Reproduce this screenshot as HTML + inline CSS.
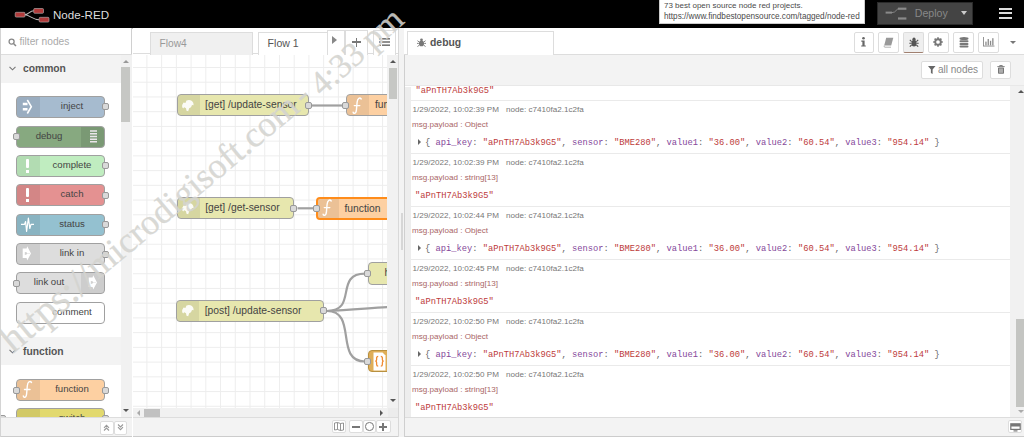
<!DOCTYPE html>
<html><head><meta charset="utf-8">
<style>
*{box-sizing:border-box;margin:0;padding:0}
html,body{width:1024px;height:443px;overflow:hidden;background:#fff;font-family:"Liberation Sans",sans-serif;position:relative}
.a{position:absolute}
#hdr{left:0;top:0;width:1024px;height:29px;background:#000;border-bottom:1px solid #c4c4c4}
.node{position:absolute;border:1px solid #a0a0a0;border-radius:4px;font-size:9.6px;color:#444;overflow:visible}
.node .ic{position:absolute;top:0;bottom:0;width:23px;background:rgba(0,0,0,0.07)}
.node .lb{position:absolute;top:0;bottom:0;line-height:18.8px;white-space:nowrap;text-align:center}
.port{position:absolute;width:7px;height:7px;background:#d9d9d9;border:1px solid #999;border-radius:2px}
.btn{position:absolute;background:#fff;border:1px solid #ddd;border-radius:2px}
.ts{position:absolute;font-size:8.1px;color:#777;white-space:nowrap}
.mt{position:absolute;font-size:8.1px;color:#a66;white-space:nowrap}
.mono{position:absolute;font-family:"Liberation Mono",monospace;font-size:8.75px;white-space:pre;color:#666}
.k{color:#84479a}.s{color:#bd3b3b}
.wn{font-size:10.3px}
.wn .lb{line-height:19.6px}
.sep{position:absolute;left:410.7px;width:599px;height:1px;background:#eaeaea}
</style></head><body>

<!-- HEADER -->
<div id="hdr" class="a"></div>
<svg class="a" style="left:14px;top:7px" width="36" height="16" viewBox="0 0 36 16">
  <path d="M10.5 7.8 C14.5 7.8 15.5 3.8 19.8 3.8 M10.5 7.8 C15.5 7.8 19 12.8 25 12.8" stroke="#bbb" stroke-width="1.1" fill="none"/>
  <rect x="1.2" y="5.3" width="9.8" height="4.8" rx="1" fill="#b03a3a" stroke="#bbb" stroke-width="0.6"/>
  <rect x="19.7" y="1.5" width="9.8" height="4.8" rx="1" fill="#b03a3a" stroke="#bbb" stroke-width="0.6"/>
  <rect x="25.2" y="10.3" width="9.8" height="4.8" rx="1" fill="#b03a3a" stroke="#bbb" stroke-width="0.6"/>
</svg>
<div class="a" style="left:53px;top:7.5px;font-size:11.6px;color:#ddd;line-height:14px">Node-RED</div>

<!-- tooltip -->
<div class="a" style="left:659px;top:0;width:206px;height:24.3px;background:#fff;border:1px solid #ccc;border-top:none"></div>
<div class="a" style="left:664px;top:0.2px;font-size:8px;line-height:11px;color:#4a4a4a;white-space:nowrap">73 best open source node red projects.<br><span style="font-size:8.2px">https://www.findbestopensource.com/tagged/node-red</span></div>

<!-- deploy -->
<div class="a" style="left:877px;top:2.2px;width:96.2px;height:22.8px;background:#444;border:1px solid #2a2a2a"></div>
<svg class="a" style="left:885px;top:6px" width="22" height="15" viewBox="0 0 22 15"><g fill="#8a8a8a"><rect x="0.6" y="5.6" width="6.4" height="2"/><rect x="13" y="1.6" width="8.4" height="2.2"/><rect x="13" y="11.4" width="8.4" height="2.2"/></g><path d="M7 6.6 L9.5 6 L13 2.7" stroke="#8a8a8a" stroke-width="0.9" fill="none"/></svg>
<div class="a" style="left:914.8px;top:7.3px;font-size:10.6px;color:#888;line-height:13px">Deploy</div>
<div class="a" style="left:961px;top:11px;width:0;height:0;border-left:3.5px solid transparent;border-right:3.5px solid transparent;border-top:4px solid #ccc"></div>
<div class="a" style="left:999px;top:8px;width:13px;height:2px;background:#ddd"></div>
<div class="a" style="left:999px;top:12px;width:13px;height:2px;background:#ddd"></div>
<div class="a" style="left:999px;top:16.5px;width:13px;height:2px;background:#ddd"></div>

<!-- PALETTE -->
<div class="a" style="left:0;top:28px;width:132.4px;height:409px;background:#fff;border-left:1px solid #d4d4d4;border-right:1px solid #d0d0d0"></div>
<div class="a" style="left:1px;top:54px;width:131px;height:1px;background:#ddd"></div>
<svg class="a" style="left:8px;top:38px" width="9" height="9" viewBox="0 0 9 9"><circle cx="3.6" cy="3.6" r="2.5" stroke="#888" stroke-width="1.3" fill="none"/><path d="M5.5 5.5 L8 8" stroke="#888" stroke-width="1.5"/></svg>
<div class="a" style="left:19.5px;top:36px;font-size:10.2px;color:#aaa;line-height:12px">filter nodes</div>
<div class="a" style="left:1px;top:55px;width:120px;height:28px;background:#f3f3f3"></div>
<svg class="a" style="left:9px;top:66px" width="7" height="5" viewBox="0 0 7 5"><path d="M0.5 0.8 L3.5 3.8 L6.5 0.8" stroke="#777" stroke-width="1.1" fill="none"/></svg>
<div class="a" style="left:23px;top:62px;font-size:10.3px;font-weight:bold;color:#555;line-height:13px">common</div>
<!-- palette scrollbar -->
<div class="a" style="left:121px;top:55px;width:11px;height:362px;background:#f1f1f1"></div>
<div class="a" style="left:123px;top:59.5px;width:0;height:0;border-left:3px solid transparent;border-right:3px solid transparent;border-bottom:3px solid #999"></div>
<div class="a" style="left:121.3px;top:66.5px;width:9px;height:55px;background:#c6c7c4"></div>
<div class="a" style="left:123px;top:409px;width:0;height:0;border-left:3px solid transparent;border-right:3px solid transparent;border-top:3px solid #555"></div>

<!-- palette nodes -->
<div class="node" style="left:16px;top:95.8px;width:89px;height:22px;background:#a6bbcf"><div class="ic" style="left:0;border-radius:4px 0 0 4px"></div><div class="lb" style="left:23px;right:0">inject</div></div>
<div class="port" style="left:102px;top:103.3px"></div>
<svg class="a" style="left:16px;top:96px" width="24" height="22" viewBox="0 0 24 22"><g stroke="#fff" fill="none"><path d="M6.8 8 H11.5 M6.8 13.3 H11.5" stroke-width="2.4"/><path d="M11.3 4 L15.3 10.7 L11.3 17.5" stroke-width="1.6"/></g></svg>

<div class="node" style="left:16px;top:125.5px;width:89px;height:22px;background:#87a980"><div class="ic" style="right:0;border-radius:0 4px 4px 0;background:rgba(0,0,0,0.09)"></div><div class="lb" style="left:0;right:23px">debug</div></div>
<div class="port" style="left:13px;top:133px"></div>
<svg class="a" style="left:88px;top:129px" width="12" height="16" viewBox="0 0 12 16"><g stroke="#ebe6ea" stroke-width="1.5"><path d="M2 2 H9 M2 4.7 H9 M2 7.5 H9 M2 10.2 H9 M2 12.8 H9"/></g></svg>

<div class="node" style="left:16px;top:154.7px;width:89px;height:22px;background:#c0edc0"><div class="ic" style="left:0;border-radius:4px 0 0 4px"></div><div class="lb" style="left:23px;right:0">complete</div></div>
<div class="port" style="left:102px;top:162px"></div>
<div class="a" style="left:26.3px;top:158.5px;width:2.6px;height:9.5px;background:#fff;border-radius:1px"></div><div class="a" style="left:26.3px;top:170px;width:2.6px;height:2.6px;background:#fff"></div>

<div class="node" style="left:16px;top:183.9px;width:89px;height:22px;background:#e49191"><div class="ic" style="left:0;border-radius:4px 0 0 4px"></div><div class="lb" style="left:23px;right:0">catch</div></div>
<div class="port" style="left:102px;top:191.5px"></div>
<div class="a" style="left:26.3px;top:187.5px;width:2.6px;height:9.5px;background:#fff;border-radius:1px"></div><div class="a" style="left:26.3px;top:199px;width:2.6px;height:2.6px;background:#fff"></div>

<div class="node" style="left:16px;top:213.5px;width:89px;height:22px;background:#94c1d0"><div class="ic" style="left:0;border-radius:4px 0 0 4px"></div><div class="lb" style="left:23px;right:0">status</div></div>
<div class="port" style="left:102px;top:221px"></div>
<svg class="a" style="left:14px;top:212px" width="30" height="26" viewBox="14 212 30 26"><path d="M21 224.4 H24.5 L25.6 221.5 L26.6 231.5 L28.4 218 L29.8 228.5 L31 224.4 H34" fill="none" stroke="#fff" stroke-width="1.2" stroke-linejoin="round"/></svg>

<div class="node" style="left:16px;top:242.7px;width:89px;height:22px;background:#ddd"><div class="ic" style="left:0;border-radius:4px 0 0 4px"></div><div class="lb" style="left:23px;right:0">link in</div></div>
<div class="port" style="left:102px;top:250.5px"></div>
<svg class="a" style="left:14px;top:241px" width="30" height="26" viewBox="14 241 30 26"><path d="M22.7 248.6 H26.6 L27.2 246.2 L31 253.4 L27.2 260.6 L26.6 258 H22.7 Z" fill="#fff"/><path d="M24.8 252.1 Q27.2 252.1 27.2 253.5 Q27.2 254.9 24.8 254.9 Z" fill="#d2d2d2"/><path d="M27 253.5 H30" stroke="#d8d8d8" stroke-width="0.5"/></svg>

<div class="node" style="left:16px;top:271.9px;width:89px;height:22px;background:#ddd"><div class="ic" style="right:0;border-radius:0 4px 4px 0"></div><div class="lb" style="left:0;right:23px">link out</div></div>
<div class="port" style="left:13px;top:279.5px"></div>
<svg class="a" style="left:80.2px;top:270.2px" width="30" height="26" viewBox="14 241 30 26"><path d="M22.7 248.6 H26.6 L27.2 246.2 L31 253.4 L27.2 260.6 L26.6 258 H22.7 Z" fill="#fff"/><path d="M24.8 252.1 Q27.2 252.1 27.2 253.5 Q27.2 254.9 24.8 254.9 Z" fill="#d2d2d2"/><path d="M27 253.5 H30" stroke="#d8d8d8" stroke-width="0.5"/></svg>

<div class="node" style="left:16px;top:301.6px;width:89px;height:22px;background:#fff"><div class="ic" style="left:0;border-radius:4px 0 0 4px;background:rgba(0,0,0,0.05)"></div><div class="lb" style="left:23px;right:0">comment</div></div>

<div class="a" style="left:1px;top:337px;width:120px;height:28px;background:#f3f3f3"></div>
<svg class="a" style="left:9px;top:349px" width="7" height="5" viewBox="0 0 7 5"><path d="M0.5 0.8 L3.5 3.8 L6.5 0.8" stroke="#777" stroke-width="1.1" fill="none"/></svg>
<div class="a" style="left:23px;top:344.5px;font-size:10.3px;font-weight:bold;color:#555;line-height:13px">function</div>

<div class="node" style="left:16px;top:378.8px;width:89px;height:22px;background:#fdd0a2"><div class="ic" style="left:0;border-radius:4px 0 0 4px"></div><div class="lb" style="left:23px;right:0">function</div></div>
<div class="port" style="left:13px;top:386.5px"></div><div class="port" style="left:102px;top:386.5px"></div>
<svg class="a" style="left:12px;top:377px" width="32" height="26" viewBox="12 377 32 26"><path d="M31.5 382.5 Q30.5 381 29 381.8 Q27.6 382.8 27.3 386 L26.6 394 Q26.2 397.5 24.3 397.2 Q23.4 397 23.3 396 M24.5 389.5 H30" fill="none" stroke="#fff" stroke-width="1.4" stroke-linecap="round"/></svg>

<div class="a" style="left:1px;top:400px;width:120px;height:17px;overflow:hidden">
  <div class="node" style="left:15px;top:8.4px;width:89px;height:21px;background:#e2d96e"><div class="ic" style="left:0;border-radius:4px 0 0 4px"></div><div class="lb" style="left:23px;right:0">switch</div></div>
  <div class="port" style="left:-2px;top:15px"></div><div class="port" style="left:101px;top:15px"></div>
</div>

<!-- palette footer -->
<div class="a" style="left:1px;top:417px;width:131px;height:20px;background:#f3f3f3;border-top:1px solid #ddd;border-bottom:1px solid #ccc"></div>
<div class="btn" style="left:99.5px;top:421px;width:14px;height:13.5px"></div>
<div class="btn" style="left:113.5px;top:421px;width:13.5px;height:13.5px"></div>
<svg class="a" style="left:102px;top:423px" width="9" height="9" viewBox="0 0 9 9"><path d="M2 4.8 L4.5 2.3 L7 4.8 M2 7.5 L4.5 5 L7 7.5" stroke="#999" stroke-width="1.1" fill="none"/></svg>
<svg class="a" style="left:116px;top:423px" width="9" height="9" viewBox="0 0 9 9"><path d="M2 1.5 L4.5 4 L7 1.5 M2 4.2 L4.5 6.7 L7 4.2" stroke="#999" stroke-width="1.1" fill="none"/></svg>

<!-- WORKSPACE -->
<div class="a" style="left:133px;top:28px;width:266px;height:26px;background:#fff;border-bottom:1px solid #ddd"></div>
<div class="a" style="left:150px;top:31.5px;width:103px;height:23px;background:#f0f0f0;border:1px solid #ddd;border-bottom:none"></div>
<div class="a" style="left:159.6px;top:37.2px;font-size:10.2px;color:#999;line-height:13px">Flow4</div>
<div class="a" style="left:257.5px;top:31.5px;width:70px;height:23.5px;background:#fff;border:1px solid #ddd;border-bottom:none"></div>
<div class="a" style="left:267.6px;top:37.2px;font-size:10.55px;color:#555;line-height:13px">Flow 1</div>
<div class="a" style="left:327px;top:29.5px;width:18px;height:25px;background:#fff;border:1px solid #ddd;border-bottom:none"></div>
<div class="a" style="left:332px;top:36px;width:0;height:0;border-top:4.5px solid transparent;border-bottom:4.5px solid transparent;border-left:5px solid #888"></div>
<div class="a" style="left:344.5px;top:29.5px;width:23px;height:25px;background:#fff;border:1px solid #ddd;border-bottom:none"></div>
<div class="a" style="left:352px;top:41px;width:9px;height:1.8px;background:#777"></div><div class="a" style="left:355.6px;top:37.5px;width:1.8px;height:9px;background:#777"></div>
<div class="a" style="left:373px;top:29.5px;width:23px;height:25px;background:#fff;border:1px solid #ddd;border-bottom:none"></div>
<svg class="a" style="left:379px;top:37px" width="11" height="10" viewBox="0 0 11 10"><g fill="#777"><rect x="0" y="1" width="2" height="1.6"/><rect x="3" y="1" width="8" height="1.6"/><rect x="0" y="4.2" width="2" height="1.6"/><rect x="3" y="4.2" width="8" height="1.6"/><rect x="0" y="7.4" width="2" height="1.6"/><rect x="3" y="7.4" width="8" height="1.6"/></g></svg>

<!-- grid -->
<svg class="a" style="left:133px;top:55px" width="255" height="353">
  <defs><pattern id="g" x="0" y="0" width="14.73" height="14.73" patternUnits="userSpaceOnUse" patternTransform="translate(13.4,12.0)"><path d="M0.5 0 V14.73 M0 0.5 H14.73" stroke="#ededed" stroke-width="1" fill="none"/></pattern></defs>
  <rect width="255" height="353" fill="url(#g)"/>
</svg>

<!-- wires -->
<svg class="a" style="left:0;top:0" width="387.4" height="408">
  <g stroke="#a0a0a0" stroke-width="2.2" fill="none">
    <path d="M312 105.5 H343"/>
    <path d="M297.5 208.3 H313"/>
    <path d="M327 311 C358 311 334 273.7 365 273.7"/>
    <path d="M327 311 C358 311 334 361.5 365 361.5"/>
    <path d="M327 311 C350 310 370 308 388 307"/>
  </g>
</svg>

<!-- workspace nodes -->
<div class="a" style="left:0;top:0;width:387.4px;height:408px;overflow:hidden">
  <div class="node wn" style="left:176.6px;top:94.4px;width:132.6px;height:22px;background:#e7e7ae"><div class="ic" style="left:0;width:22px;border-radius:4px 0 0 4px"></div><div class="lb" style="left:27.5px;text-align:left">[get] /update-sensor</div></div>
  <div class="port" style="left:305.2px;top:101.9px"></div>
  <div class="node wn" style="left:345.9px;top:94.3px;width:70px;height:22.1px;background:#fdd0a2"><div class="ic" style="left:0;width:22.5px;border-radius:4px 0 0 4px"></div><div class="lb" style="left:28px;text-align:left">function</div></div>
  <div class="port" style="left:342.2px;top:101.8px"></div>

  <div class="node wn" style="left:176.7px;top:197.4px;width:117.5px;height:21.9px;background:#e7e7ae"><div class="ic" style="left:0;width:22px;border-radius:4px 0 0 4px"></div><div class="lb" style="left:27.5px;text-align:left">[get] /get-sensor</div></div>
  <div class="port" style="left:290.3px;top:204.7px"></div>
  <div class="node wn" style="left:316px;top:196.7px;width:90px;height:23px;background:#fdd0a2;border:2px solid #ff8c1a"><div class="ic" style="left:0;width:21px;border-radius:3px 0 0 3px"></div><div class="lb" style="left:26.5px;text-align:left;line-height:19px">function</div></div>
  <div class="port" style="left:312.6px;top:204.7px"></div>

  <div class="node wn" style="left:176.2px;top:299.6px;width:147.6px;height:22.6px;background:#e7e7ae"><div class="ic" style="left:0;width:22px;border-radius:4px 0 0 4px"></div><div class="lb" style="left:27.5px;text-align:left;line-height:20.5px">[post] /update-sensor</div></div>
  <div class="port" style="left:320.2px;top:307.3px"></div>

  <div class="node wn" style="left:367.6px;top:262px;width:60px;height:22.6px;background:#e7e7ae"><div class="lb" style="left:16px;text-align:left;line-height:20.5px">http</div></div>
  <div class="port" style="left:364.2px;top:270.3px"></div>

  <div class="node wn" style="left:368px;top:350.2px;width:40px;height:22.3px;background:#dfae58;border-color:#b8903f"></div>
  <div class="port" style="left:364.1px;top:358px"></div>
  <svg class="a" style="left:372.5px;top:352px" width="13" height="19" viewBox="0 0 13 19"><path d="M0.5 0.5 H9.5 L12.5 3.5 V18.5 H0.5 Z" fill="#fff"/><g stroke="#f08a30" stroke-width="1.3" fill="none"><path d="M5.2 4.3 Q3.6 4.3 3.6 6.3 V7.8 Q3.6 9.2 2.3 9.2 Q3.6 9.2 3.6 10.6 V12.3 Q3.6 14.2 5.2 14.2"/><path d="M7.8 4.3 Q9.4 4.3 9.4 6.3 V7.8 Q9.4 9.2 10.7 9.2 Q9.4 9.2 9.4 10.6 V12.3 Q9.4 14.2 7.8 14.2"/></g></svg>

  <!-- function icons -->
  <svg class="a" style="left:351.5px;top:96.5px" width="11" height="18" viewBox="0 0 11 18"><path class="fpath" d="M9.2 2 Q8.2 0.6 6.8 1.3 Q5.4 2.2 5.1 5.3 L4.4 13.2 Q4 16.6 2.1 16.3 Q1.2 16.1 1.1 15.2 M2.3 8.6 H7.8" fill="none" stroke="#fff" stroke-width="1.4" stroke-linecap="round"/></svg>
  <svg class="a" style="left:322px;top:199px" width="11" height="18" viewBox="0 0 11 18"><path d="M9.2 2 Q8.2 0.6 6.8 1.3 Q5.4 2.2 5.1 5.3 L4.4 13.2 Q4 16.6 2.1 16.3 Q1.2 16.1 1.1 15.2 M2.3 8.6 H7.8" fill="none" stroke="#fff" stroke-width="1.4" stroke-linecap="round"/></svg>

  <!-- globe icons -->
  <svg class="a" style="left:181px;top:98.5px" width="14" height="13" viewBox="0 0 14 13"><path d="M5.5 1.5 Q8.5 0.3 11 2 Q13.3 4.5 12.6 6.3 L11 6 L10 8.3 L8.2 9.2 L7.2 12.3 L5.5 11.8 L5 9.3 L3.2 8.2 L2.2 9.5 L1.2 8.2 Q0.8 5.5 2.6 3.5 L4.4 4 Z" fill="#fff" fill-opacity="0.9"/></svg>
  <svg class="a" style="left:181px;top:201.5px" width="14" height="13" viewBox="0 0 14 13"><path d="M5.5 1.5 Q8.5 0.3 11 2 Q13.3 4.5 12.6 6.3 L11 6 L10 8.3 L8.2 9.2 L7.2 12.3 L5.5 11.8 L5 9.3 L3.2 8.2 L2.2 9.5 L1.2 8.2 Q0.8 5.5 2.6 3.5 L4.4 4 Z" fill="#fff" fill-opacity="0.9"/></svg>
  <svg class="a" style="left:181px;top:304px" width="14" height="13" viewBox="0 0 14 13"><path d="M5.5 1.5 Q8.5 0.3 11 2 Q13.3 4.5 12.6 6.3 L11 6 L10 8.3 L8.2 9.2 L7.2 12.3 L5.5 11.8 L5 9.3 L3.2 8.2 L2.2 9.5 L1.2 8.2 Q0.8 5.5 2.6 3.5 L4.4 4 Z" fill="#fff" fill-opacity="0.9"/></svg>
</div>

<!-- ws scrollbars -->
<div class="a" style="left:387.4px;top:55px;width:10.8px;height:353px;background:#f1f1f1"></div>
<div class="a" style="left:390px;top:59.5px;width:0;height:0;border-left:3px solid transparent;border-right:3px solid transparent;border-bottom:3px solid #555"></div>
<div class="a" style="left:388.6px;top:67.5px;width:8.2px;height:31px;background:#c6c7c4"></div>
<div class="a" style="left:390px;top:399px;width:0;height:0;border-left:3px solid transparent;border-right:3px solid transparent;border-top:3px solid #555"></div>
<div class="a" style="left:133px;top:408px;width:255px;height:9px;background:#f1f1f1"></div>
<div class="a" style="left:137px;top:409.5px;width:0;height:0;border-top:3px solid transparent;border-bottom:3px solid transparent;border-right:3px solid #aaa"></div>
<div class="a" style="left:144px;top:408.5px;width:15.5px;height:8px;background:#c1c1c1"></div>
<div class="a" style="left:380px;top:409.5px;width:0;height:0;border-top:3px solid transparent;border-bottom:3px solid transparent;border-left:3px solid #555"></div>
<div class="a" style="left:388px;top:408px;width:10px;height:9px;background:#ececec"></div>
<!-- ws footer -->
<div class="a" style="left:133px;top:417px;width:266px;height:20px;background:#f3f3f3;border-top:1px solid #ddd;border-bottom:1px solid #ccc;border-right:1px solid #bbb"></div>
<div class="btn" style="left:332px;top:420px;width:13.5px;height:13px"></div>
<svg class="a" style="left:334px;top:422px" width="10" height="9" viewBox="0 0 10 9"><path d="M0.5 1 L3.5 0.5 L6.5 1.5 L9.5 1 V8 L6.5 8.5 L3.5 7.5 L0.5 8 Z M3.5 0.5 V7.5 M6.5 1.5 V8.5" stroke="#888" stroke-width="0.9" fill="none"/></svg>
<div class="btn" style="left:349px;top:420px;width:13.5px;height:13px"></div>
<div class="btn" style="left:362.5px;top:420px;width:13.5px;height:13px"></div>
<div class="btn" style="left:376px;top:420px;width:14.5px;height:13px"></div>
<div class="a" style="left:352px;top:425.8px;width:8px;height:1.8px;background:#777"></div>
<div class="a" style="left:365px;top:422.3px;width:8.6px;height:8.6px;border:1.2px solid #777;border-radius:50%"></div>
<div class="a" style="left:379px;top:425.8px;width:8px;height:1.8px;background:#777"></div><div class="a" style="left:382.1px;top:422.7px;width:1.8px;height:8px;background:#777"></div>

<!-- splitter -->
<div class="a" style="left:397.6px;top:28px;width:7.2px;height:409px;background:#f3f3f3;border-left:1px solid #d8d8d8;border-right:1px solid #cfcfcf"></div>
<div class="a" style="left:400.5px;top:212.6px;width:2.4px;height:37px;background:#d6d6d6"></div>

<!-- SIDEBAR -->
<div class="a" style="left:404px;top:28px;width:620px;height:26.5px;background:#fff;border-bottom:1px solid #ddd"></div>
<div class="a" style="left:407px;top:31px;width:147px;height:24px;background:#fff;border:1px solid #ddd;border-bottom:none"></div>
<svg class="a" style="left:417px;top:37.5px" width="9" height="9" viewBox="0 0 10 10"><g fill="#777"><ellipse cx="5" cy="6" rx="2.8" ry="3.3"/><circle cx="5" cy="2" r="1.5"/><path d="M0.5 3 L2.5 4.5 M9.5 3 L7.5 4.5 M0 6 H2 M10 6 H8 M0.5 9.5 L2.5 8 M9.5 9.5 L7.5 8" stroke="#777" stroke-width="1"/></g></svg>
<div class="a" style="left:430px;top:36.2px;font-size:10.4px;font-weight:bold;color:#555;line-height:13px">debug</div>

<div class="btn" style="left:853.5px;top:32.3px;width:20.5px;height:20.5px"></div>
<div class="btn" style="left:878.2px;top:32.3px;width:20.5px;height:20.5px"></div>
<div class="btn" style="left:903.2px;top:32.3px;width:20.5px;height:20.5px;background:#efefef;border-bottom:1px solid #a08070"></div>
<div class="btn" style="left:928.4px;top:32.3px;width:20.5px;height:20.5px"></div>
<div class="btn" style="left:953.4px;top:32.3px;width:20.5px;height:20.5px"></div>
<div class="btn" style="left:978.2px;top:32.3px;width:20.5px;height:20.5px"></div>
<svg class="a" style="left:860px;top:37px" width="7" height="10" viewBox="0 0 7 10"><g fill="#666"><circle cx="3.5" cy="1.3" r="1.3"/><path d="M1.3 3.6 H4.6 V8.4 H5.8 V9.6 H1.2 V8.4 H2.4 V4.8 H1.3 Z"/></g></svg>
<svg class="a" style="left:883px;top:37px" width="11" height="11" viewBox="0 0 11 11"><path d="M3.2 0.8 H10.3 L8.2 8.6 H1.2 Z" fill="#999"/><path d="M1.2 8.6 Q0.6 10.2 2 10.2 H8" stroke="#aaa" stroke-width="0.9" fill="none"/></svg>
<svg class="a" style="left:908.5px;top:37px" width="10" height="10" viewBox="0 0 10 10"><g fill="#555"><ellipse cx="5" cy="6.2" rx="2.6" ry="3.2"/><circle cx="5" cy="2.2" r="1.6"/><path d="M0.8 2.8 L2.6 4.6 M9.2 2.8 L7.4 4.6 M0.3 6.3 H2.4 M9.7 6.3 H7.6 M0.8 9.6 L2.6 8 M9.2 9.6 L7.4 8" stroke="#555" stroke-width="1.1"/></g></svg>
<svg class="a" style="left:933px;top:37px" width="10" height="10" viewBox="0 0 10 10"><circle cx="5" cy="5" r="2.8" fill="none" stroke="#777" stroke-width="1.9"/><g stroke="#777" stroke-width="1.6"><path d="M5 0.2 V2 M5 8 V9.8 M0.2 5 H2 M8 5 H9.8 M1.6 1.6 L2.9 2.9 M7.1 7.1 L8.4 8.4 M1.6 8.4 L2.9 7.1 M7.1 2.9 L8.4 1.6"/></g></svg>
<svg class="a" style="left:958.8px;top:37px" width="10" height="10.5" viewBox="0 0 10 10.5"><g fill="#777"><ellipse cx="5" cy="1.6" rx="4.5" ry="1.5"/><rect x="0.5" y="3.3" width="9" height="2" rx="1"/><rect x="0.5" y="5.9" width="9" height="2" rx="1"/><rect x="0.5" y="8.4" width="9" height="2" rx="1"/></g></svg>
<svg class="a" style="left:982.5px;top:37px" width="12" height="10" viewBox="0 0 12 10"><g fill="#8a8a8a"><rect x="0" y="0" width="0.9" height="9"/><rect x="0" y="8.6" width="11.5" height="0.9"/><rect x="2.3" y="4.6" width="1.3" height="3.8"/><rect x="4.6" y="2" width="1.3" height="6.4"/><rect x="6.9" y="3.8" width="1.3" height="4.6"/><rect x="9.2" y="1.2" width="1.3" height="7.2"/></g></svg>
<div class="a" style="left:1010px;top:40.5px;width:0;height:0;border-left:3.3px solid transparent;border-right:3.3px solid transparent;border-top:3.5px solid #777"></div>

<!-- debug toolbar -->
<div class="a" style="left:404.8px;top:55px;width:619.2px;height:31px;background:#f3f3f3;border-bottom:1px solid #e8e8e8"></div>
<div class="btn" style="left:921.4px;top:60.8px;width:62px;height:18px"></div>
<svg class="a" style="left:928px;top:65.5px" width="8" height="8" viewBox="0 0 8 8"><path d="M0 0 H7.5 L4.6 3.6 V8 L2.9 7 V3.6 Z" fill="#666"/></svg>
<div class="a" style="left:938px;top:63.7px;font-size:10px;color:#888;line-height:12px">all nodes</div>
<div class="btn" style="left:990px;top:60.8px;width:21px;height:18px"></div>
<svg class="a" style="left:996.5px;top:65px" width="8" height="9" viewBox="0 0 8 9"><path d="M0.3 1.6 H7.7 M2.7 1.6 V0.5 H5.3 V1.6" stroke="#777" stroke-width="0.9" fill="none"/><rect x="1" y="2.4" width="6" height="6.4" rx="0.7" fill="#777"/><g stroke="#e6e6e6" stroke-width="0.7"><path d="M2.8 3.5 V7.8 M4 3.5 V7.8 M5.2 3.5 V7.8"/></g></svg>

<!-- messages -->
<div class="a" style="left:404.8px;top:87px;width:6px;height:330px;background:#ededed"></div>
<div class="a" style="left:1009.5px;top:85.5px;width:14.5px;height:332px;background:#f1f1f1"></div>
<div class="a" style="left:1017.5px;top:90px;width:0;height:0;border-left:3px solid transparent;border-right:3px solid transparent;border-bottom:3px solid #555"></div>
<div class="a" style="left:1015.5px;top:318.5px;width:8.5px;height:88px;background:#c4c5c2"></div>
<div class="a" style="left:1017.5px;top:410px;width:0;height:0;border-left:3px solid transparent;border-right:3px solid transparent;border-top:3px solid #aaa"></div>

<div class="mono s" style="left:415.5px;top:84.8px;line-height:12px">"aPnTH7Ab3k9G5"</div>

<div id="msgs">
<div class="sep" style="top:100.2px"></div>
<div class="ts" style="left:412.5px;top:105.0px;line-height:10px">1/29/2022, 10:02:39 PM</div>
<div class="ts" style="left:506px;top:105.0px;line-height:10px">node: c7410fa2.1c2fa</div>
<div class="mt" style="left:412px;top:119.8px;line-height:10px">msg.payload : Object</div>
<div class="a" style="left:418px;top:139.3px;width:0;height:0;border-top:3px solid transparent;border-bottom:3px solid transparent;border-left:3.5px solid #666"></div>
<div class="mono" style="left:424.9px;top:136.8px;line-height:12px">{ <span class="k">api_key</span>: <span class="s">"aPnTH7Ab3k9G5"</span>, <span class="k">sensor</span>: <span class="s">"BME280"</span>, <span class="k">value1</span>: <span class="s">"36.00"</span>, <span class="k">value2</span>: <span class="s">"60.54"</span>, <span class="k">value3</span>: <span class="s">"954.14"</span> }</div>
<div class="sep" style="top:153.2px"></div>
<div class="ts" style="left:412.5px;top:158.0px;line-height:10px">1/29/2022, 10:02:39 PM</div>
<div class="ts" style="left:506px;top:158.0px;line-height:10px">node: c7410fa2.1c2fa</div>
<div class="mt" style="left:412px;top:172.8px;line-height:10px">msg.payload : string[13]</div>
<div class="mono s" style="left:414.9px;top:189.8px;line-height:12px">"aPnTH7Ab3k9G5"</div>
<div class="sep" style="top:206.2px"></div>
<div class="ts" style="left:412.5px;top:211.0px;line-height:10px">1/29/2022, 10:02:44 PM</div>
<div class="ts" style="left:506px;top:211.0px;line-height:10px">node: c7410fa2.1c2fa</div>
<div class="mt" style="left:412px;top:225.8px;line-height:10px">msg.payload : Object</div>
<div class="a" style="left:418px;top:245.3px;width:0;height:0;border-top:3px solid transparent;border-bottom:3px solid transparent;border-left:3.5px solid #666"></div>
<div class="mono" style="left:424.9px;top:242.8px;line-height:12px">{ <span class="k">api_key</span>: <span class="s">"aPnTH7Ab3k9G5"</span>, <span class="k">sensor</span>: <span class="s">"BME280"</span>, <span class="k">value1</span>: <span class="s">"36.00"</span>, <span class="k">value2</span>: <span class="s">"60.54"</span>, <span class="k">value3</span>: <span class="s">"954.14"</span> }</div>
<div class="sep" style="top:259.2px"></div>
<div class="ts" style="left:412.5px;top:264.0px;line-height:10px">1/29/2022, 10:02:45 PM</div>
<div class="ts" style="left:506px;top:264.0px;line-height:10px">node: c7410fa2.1c2fa</div>
<div class="mt" style="left:412px;top:278.8px;line-height:10px">msg.payload : string[13]</div>
<div class="mono s" style="left:414.9px;top:295.8px;line-height:12px">"aPnTH7Ab3k9G5"</div>
<div class="sep" style="top:312.2px"></div>
<div class="ts" style="left:412.5px;top:317.0px;line-height:10px">1/29/2022, 10:02:50 PM</div>
<div class="ts" style="left:506px;top:317.0px;line-height:10px">node: c7410fa2.1c2fa</div>
<div class="mt" style="left:412px;top:331.8px;line-height:10px">msg.payload : Object</div>
<div class="a" style="left:418px;top:351.3px;width:0;height:0;border-top:3px solid transparent;border-bottom:3px solid transparent;border-left:3.5px solid #666"></div>
<div class="mono" style="left:424.9px;top:348.8px;line-height:12px">{ <span class="k">api_key</span>: <span class="s">"aPnTH7Ab3k9G5"</span>, <span class="k">sensor</span>: <span class="s">"BME280"</span>, <span class="k">value1</span>: <span class="s">"36.00"</span>, <span class="k">value2</span>: <span class="s">"60.54"</span>, <span class="k">value3</span>: <span class="s">"954.14"</span> }</div>
<div class="sep" style="top:365.2px"></div>
<div class="ts" style="left:412.5px;top:370.0px;line-height:10px">1/29/2022, 10:02:50 PM</div>
<div class="ts" style="left:506px;top:370.0px;line-height:10px">node: c7410fa2.1c2fa</div>
<div class="mt" style="left:412px;top:384.8px;line-height:10px">msg.payload : string[13]</div>
<div class="mono s" style="left:414.9px;top:401.8px;line-height:12px">"aPnTH7Ab3k9G5"</div>
</div>

<!-- sidebar footer -->
<div class="a" style="left:404.5px;top:417px;width:619.5px;height:20px;background:#f3f3f3;border-top:1px solid #ddd;border-bottom:1px solid #ccc"></div>
<div class="btn" style="left:1007.5px;top:420px;width:14.5px;height:13px"></div>
<svg class="a" style="left:1009.5px;top:422.5px" width="11" height="9" viewBox="0 0 11 9"><rect x="0.8" y="0.8" width="9.4" height="5.6" fill="#fff" stroke="#777" stroke-width="1.2"/><rect x="1" y="1" width="9" height="2.5" fill="#777"/><rect x="3.5" y="7.3" width="4" height="1.2" fill="#777"/></svg>

<!-- watermark -->
<svg class="a" style="left:0;top:0;pointer-events:none" width="1024" height="443"><g font-family="Liberation Serif" fill="#d4d4d0" fill-opacity="0.88" stroke="#d4d4d0" stroke-opacity="0.5" stroke-width="0.5">
<text transform="translate(13.0,353.9) rotate(-39.87)" font-size="40">https://</text>
<text transform="translate(97.8,280.1) rotate(-39.87)" font-size="36">microdigisoft.com</text>
<text transform="translate(304.3,106.3) rotate(-42)" font-size="34.1">-</text>
<text transform="translate(322.0,97.3) rotate(-42)" font-size="34.1" style="white-space:pre" xml:space="preserve">4:33 pm</text>
</g></svg>
</body></html>
